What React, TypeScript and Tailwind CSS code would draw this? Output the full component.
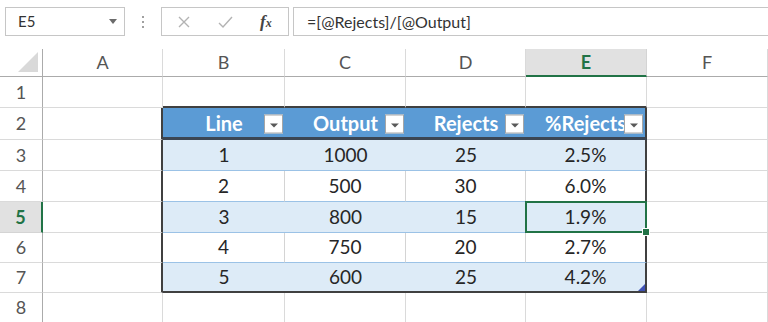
import React from 'react'

const font = { fontFamily: 'Lato, "Open Sans", sans-serif' }

const cols = ['A', 'B', 'C', 'D', 'E', 'F']
const rowHeights = ['h-[31px]', 'h-[32px]', 'h-[31px]', 'h-[31px]', 'h-[31px]', 'h-[30px]', 'h-[30px]', 'h-[30px]']

const headers = ['Line', 'Output', 'Rejects', '%Rejects']
const data = [
  ['1', '1000', '25', '2.5%'],
  ['2', '500', '30', '6.0%'],
  ['3', '800', '15', '1.9%'],
  ['4', '750', '20', '2.7%'],
  ['5', '600', '25', '4.2%'],
]

function FilterButton() {
  return (
    <div className="absolute right-[2px] top-1/2 -translate-y-1/2 mt-[1px] w-[19px] h-[19px] bg-white border border-[#a6a6a6] flex items-end justify-center pb-[5px]">
      <div className="w-0 h-0 border-l-[4px] border-r-[4px] border-t-[4px] border-l-transparent border-r-transparent border-t-[#595959]" />
    </div>
  )
}

function FormulaBar() {
  return (
    <div className="h-[49px] flex items-start pt-[7px] pl-[5px] bg-white">
      <div className="w-[120px] h-[29px] border border-[#c6c6c6] flex items-center justify-between pl-[12px] pr-[7px] text-[15px] text-[#333]">
        <span>E5</span>
        <div className="w-0 h-0 border-l-[4px] border-r-[4px] border-t-[5px] border-l-transparent border-r-transparent border-t-[#6b6b6b]" />
      </div>
      <div className="w-[36px] h-[29px] flex flex-col items-center justify-center gap-[3px]">
        <div className="w-[2px] h-[2px] bg-[#a0a0a0]" />
        <div className="w-[2px] h-[2px] bg-[#a0a0a0]" />
        <div className="w-[2px] h-[2px] bg-[#a0a0a0]" />
      </div>
      <div className="w-[128px] h-[29px] border border-[#c6c6c6] flex items-center pl-[15px]">
        <svg width="14" height="14" viewBox="0 0 14 14" className="mr-[26px]">
          <path d="M2 2 L12 12 M12 2 L2 12" stroke="#b3b3b3" strokeWidth="1.4" />
        </svg>
        <svg width="17" height="14" viewBox="0 0 17 14" className="mr-[26px]">
          <path d="M2 8 L6 12 L15 2" stroke="#b3b3b3" strokeWidth="1.4" fill="none" />
        </svg>
        <span className="text-[17px] italic text-[#444] font-semibold" style={{ fontFamily: '"Liberation Serif", serif' }}>
          f<span className="text-[12px]">x</span>
        </span>
      </div>
      <div className="ml-[4px] flex-1 h-[29px] border border-r-0 border-[#c6c6c6] flex items-center pl-[13px] text-[16px] text-[#333]">
        =[@Rejects]/[@Output]
      </div>
    </div>
  )
}

export default function App() {
  return (
    <div className="w-[768px] h-[322px] overflow-hidden bg-white" style={font}>
      <FormulaBar />
      <div className="grid grid-cols-[43px_120px_122px_121px_120px_121px_121px]">
        {/* corner cell with the select-all triangle */}
        <div className="h-[28px] border-r border-b border-[#ababab] relative bg-white">
          <svg width="20" height="20" viewBox="0 0 20 20" className="absolute right-[4px] bottom-[4px]">
            <path d="M20 0 L20 20 L0 20 Z" fill="#d9d9d9" />
          </svg>
        </div>
        {cols.map((c) => (
          <div
            key={c}
            className={
              c === 'E'
                ? 'h-[28px] flex items-center justify-center text-[18px] font-bold text-[#217346] bg-[#e1e1e1] border-r border-[#d4d4d4] border-b-2 border-b-[#217346]'
                : 'h-[28px] flex items-center justify-center text-[18px] text-[#555] border-r border-[#dadada] border-b border-b-[#ababab]'
            }
          >
            {c}
          </div>
        ))}

        {rowHeights.map((h, r) => {
          const rowNum = r + 1
          const selRow = rowNum === 5
          const inTable = rowNum >= 2 && rowNum <= 7
          return (
            <React.Fragment key={rowNum}>
              <div
                className={
                  selRow
                    ? `${h} flex items-center justify-center text-[18px] font-bold text-[#217346] bg-[#e1e1e1] border-b border-[#d4d4d4] border-r-2 border-r-[#217346]`
                    : `${h} flex items-center justify-center text-[18px] text-[#555] border-b border-[#dadada] border-r border-r-[#ababab]`
                }
              >
                {rowNum}
              </div>
              {cols.map((c, ci) => {
                const tableCol = ci >= 1 && ci <= 4
                const lastRow = rowNum === 7
                const aboveTable = rowNum === 1 && tableCol
                const leftOfTable = ci === 0 && inTable
                const rightEdge = ci === 4 && inTable

                let cls = `${h} relative flex items-center justify-center text-[19px] text-[#262626]`

                if (inTable && tableCol) {
                  if (rowNum === 2) {
                    cls += ' bg-[#5b9bd5] text-white font-bold text-[20px] border-b-[3px] border-b-[#3b4654]'
                  } else if (rowNum % 2 === 1) {
                    cls += ' bg-[#ddebf7]'
                    cls += lastRow ? ' border-b-2 border-b-[#404040]' : ' border-b border-b-[#9bc2e6]'
                  } else {
                    cls += ' bg-white border-b border-b-[#9bc2e6]'
                  }
                  if (rightEdge) cls += ' border-r-2 border-r-[#404040]'
                  else if (rowNum % 2 === 0 && rowNum !== 2) cls += ' border-r border-r-[#d4d4d4]'
                } else {
                  cls += aboveTable ? ' border-b-2 border-b-[#404040]' : ' border-b border-b-[#dadada]'
                  cls += leftOfTable ? ' border-r-2 border-r-[#404040]' : ' border-r border-r-[#dadada]'
                }

                const content = inTable && tableCol ? (rowNum === 2 ? headers[ci - 1] : data[rowNum - 3][ci - 1]) : null
                const selected = rowNum === 5 && c === 'E'

                return (
                  <div key={c} className={cls}>
                    {content}
                    {rowNum === 2 && tableCol && <FilterButton />}
                    {selected && (
                      <div className="absolute z-10 -left-[1px] -top-[1px] -right-[2px] -bottom-[1px] border-2 border-[#217346]">
                        <div className="absolute -right-[5px] -bottom-[5px] w-[8px] h-[8px] bg-[#217346] border border-white" />
                      </div>
                    )}
                    {lastRow && c === 'E' && (
                      <svg width="7" height="7" viewBox="0 0 7 7" className="absolute right-0 bottom-0">
                        <path d="M7 0 L7 7 L0 7 Z" fill="#3f51b5" />
                      </svg>
                    )}
                  </div>
                )
              })}
            </React.Fragment>
          )
        })}
      </div>
    </div>
  )
}
